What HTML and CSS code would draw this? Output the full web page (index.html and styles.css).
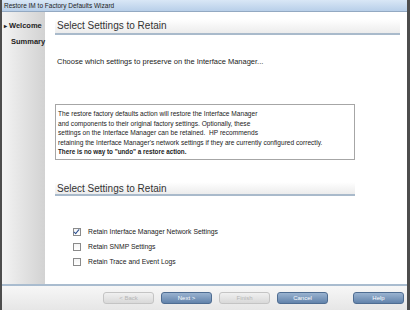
FILE: index.html
```html
<!DOCTYPE html>
<html lang="en">
<head>
  <meta charset="UTF-8">
  <title>Restore IM to Factory Defaults Wizard</title>
  <link rel="stylesheet" href="styles.css">
</head>
<body>

<div class="wizard">
  <div class="titlebar">Restore IM to Factory Defaults Wizard</div>

  <div class="wizard-body">
    <ul class="steps">
      <li class="step current"><span class="arrow">&#9656;</span>Welcome</li>
      <li class="step">Summary</li>
    </ul>

    <div class="page">
      <div class="section-head wide">Select Settings to Retain</div>
      <p class="intro">Choose which settings to preserve on the Interface Manager...</p>

      <div class="notice">
        The restore factory defaults action will restore the Interface Manager<br>
        and components to their original factory settings. Optionally, these<br>
        settings on the Interface Manager can be retained.&nbsp; HP recommends<br>
        retaining the Interface Manager's network settings if they are currently configured correctly.<br>
        <strong>There is no way to "undo" a restore action.</strong>
      </div>

      <div class="section-head narrow">Select Settings to Retain</div>

      <div class="options">
        <label class="option"><span class="box checked"></span>Retain Interface Manager Network Settings</label>
        <label class="option"><span class="box"></span>Retain SNMP Settings</label>
        <label class="option"><span class="box"></span>Retain Trace and Event Logs</label>
      </div>
    </div>
  </div>

  <div class="footer">
    <button class="btn" disabled>&lt; Back</button>
    <button class="btn">Next &gt;</button>
    <button class="btn" disabled>Finish</button>
    <button class="btn">Cancel</button>
    <button class="btn help">Help</button>
  </div>
</div>

</body>
</html>
```

FILE: styles.css
```css
body {
  margin: 0;
  width: 410px;
  height: 310px;
  overflow: hidden;
  font-family: 'Liberation Sans', Arial, sans-serif;
  color: #222;
  background: #fff;
}

.wizard {
  height: 310px;
  display: flex;
  flex-direction: column;
  border-left: 2px solid #4d4d4d;
  border-right: 3px solid #4d4d4d;
  box-sizing: border-box;
}

.titlebar {
  height: 11px;
  line-height: 11px;
  padding-left: 2px;
  font-size: 6.5px;
  color: #222;
  background: linear-gradient(#d9e7f6, #b8cfe9);
  border-bottom: 1px solid #93a9c2;
}

.wizard-body {
  flex: 1;
  display: flex;
}

.steps {
  list-style: none;
  margin: 0;
  padding: 9px 0 0 0;
  width: 43px;
  background: linear-gradient(to right, #f3f3f3, #d2d2d2);
}

.step {
  font-size: 7.5px;
  font-weight: bold;
  color: #222;
  height: 16px;
  line-height: 10px;
  padding-left: 9px;
}

.step .arrow {
  font-size: 6px;
  margin-left: -7px;
  margin-right: 2px;
}

.page {
  flex: 1;
  padding: 7px 7px 0 10px;
}

.section-head {
  height: 14px;
  line-height: 14px;
  padding-left: 2px;
  font-size: 10px;
  color: #333;
  background: linear-gradient(#fff, #ececec);
  border-bottom: 2px solid #a9bacb;
}

.section-head.narrow {
  width: 300px;
  box-sizing: border-box;
  margin-top: 22px;
}

.intro {
  margin: 22px 0 0 2px;
  font-size: 7.5px;
  color: #222;
}

.notice {
  margin-top: 38px;
  width: 300px;
  height: 56px;
  box-sizing: border-box;
  padding: 4px 2px;
  border: 1px solid #a6a6a6;
  font-size: 6.6px;
  line-height: 9.5px;
  color: #222;
}

.notice strong {
  font-size: 6.3px;
}

.options {
  padding: 28px 0 0 18px;
}

.option {
  display: flex;
  align-items: center;
  height: 15px;
  font-size: 6.8px;
  color: #222;
}

.box {
  width: 6px;
  height: 6px;
  margin-right: 7px;
  border: 1px solid #8a8a8a;
  background: linear-gradient(#f4f4f4, #fff);
  position: relative;
}

.box.checked::after {
  content: '';
  position: absolute;
  left: 1px;
  top: -1px;
  width: 2px;
  height: 5px;
  border: solid #2b4f8f;
  border-width: 0 1.5px 1.5px 0;
  transform: rotate(40deg);
}

.footer {
  height: 26px;
  box-sizing: border-box;
  border-top: 2px solid #a9bccf;
  background: linear-gradient(#f7f7f7, #e6e6e6);
  display: flex;
  align-items: center;
  gap: 7px;
  padding: 0 0 0 101px;
}

.btn {
  width: 51px;
  height: 12px;
  padding: 0;
  border: 1px solid #4f6d92;
  border-radius: 3px;
  background: linear-gradient(#9ab3d0, #6283ab);
  color: #fff;
  font-family: 'Liberation Sans', Arial, sans-serif;
  font-size: 6px;
}

.btn:disabled {
  border-color: #c4c4c4;
  background: linear-gradient(#f0f0f0, #d9d9d9);
  color: #b5b5b5;
}

.btn.help {
  margin-left: 18px;
}
```
